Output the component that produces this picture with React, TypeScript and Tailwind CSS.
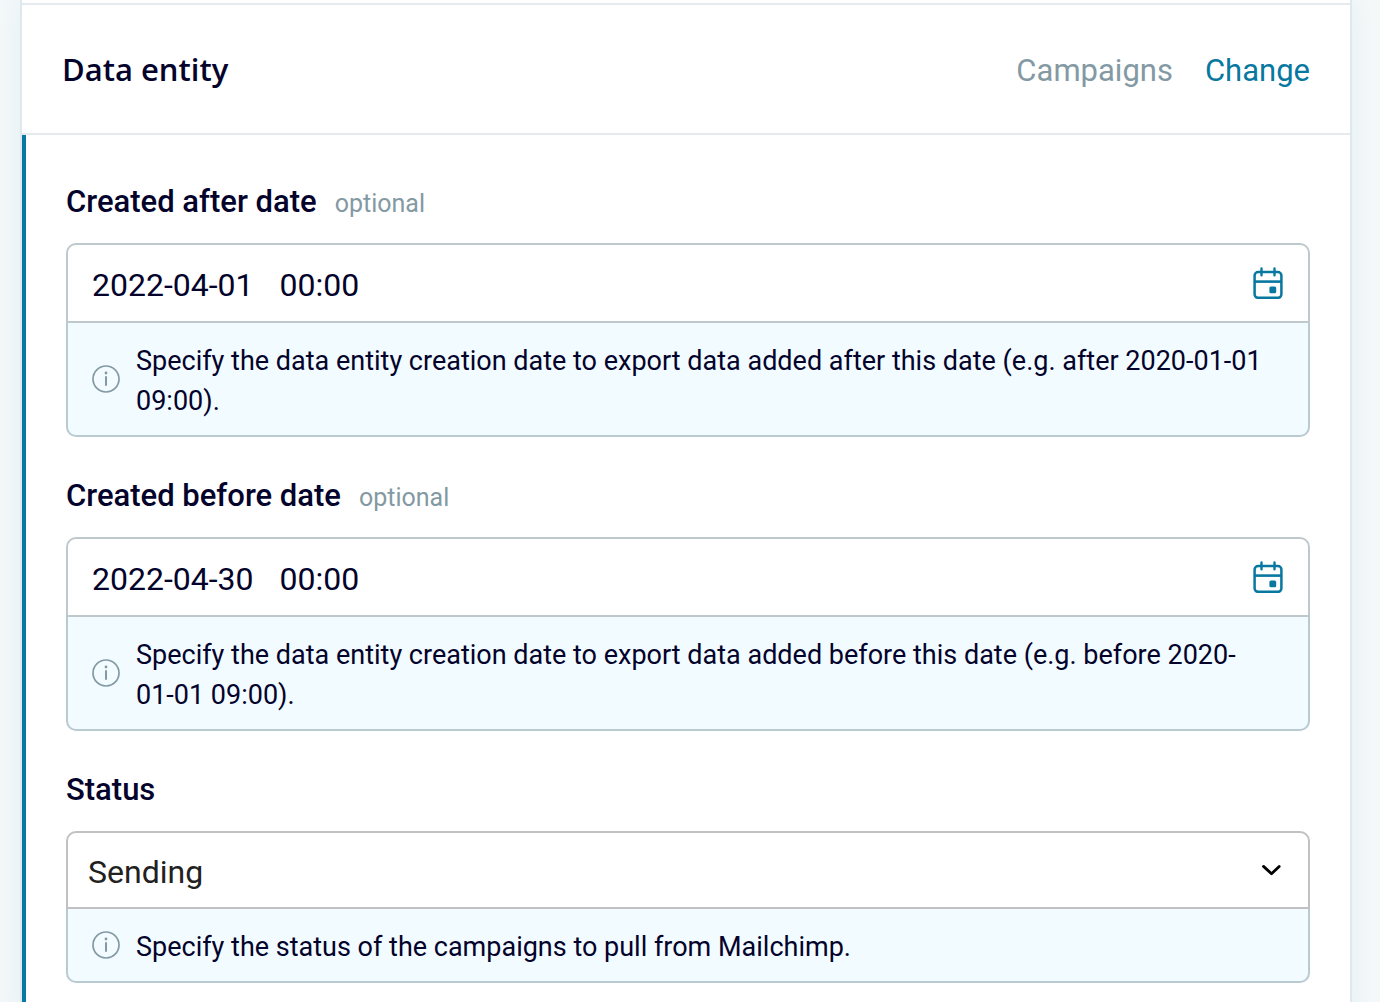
import React, { type ReactNode } from "react";

const InfoIcon = () => (
  <svg className="size-7 shrink-0" viewBox="0 0 28 28" fill="none" aria-hidden="true">
    <circle cx="14" cy="14" r="13" stroke="#8399a3" strokeWidth="1.7" />
    <path d="M14 11.2V20.8" stroke="#8399a3" strokeWidth="2" />
    <circle cx="14" cy="8" r="1.4" fill="#8399a3" />
  </svg>
);

const CalendarIcon = () => (
  <svg className="h-8 w-8" viewBox="0 0 32 32" fill="none" aria-hidden="true">
    <rect x="2.6" y="5" width="26.8" height="25.8" rx="3.5" stroke="#0878a0" strokeWidth="2.5" />
    <path d="M2.5 14.6H29.5" stroke="#0878a0" strokeWidth="2.6" />
    <path d="M9.5 1.4V8.2M22.5 1.4V8.2" stroke="#0878a0" strokeWidth="2.4" strokeLinecap="round" />
    <rect x="17.4" y="19.4" width="6.8" height="6.8" rx="1.5" fill="#0878a0" />
  </svg>
);

const ChevronIcon = () => (
  <svg className="h-3 w-5" viewBox="0 0 20 12" fill="none" aria-hidden="true">
    <path
      d="M1.5 2.4L9.5 9.8L17.2 2.4"
      stroke="#000"
      strokeWidth="2.8"
      strokeLinecap="round"
      strokeLinejoin="round"
    />
  </svg>
);

interface FieldProps {
  id: string;
  label: string;
  optional?: boolean;
  hint: ReactNode;
  children: ReactNode;
}

const Field: React.FC<FieldProps> = ({ id, label, optional, hint, children }) => (
  <div>
    <div className="mb-[19px] flex items-baseline gap-[18px]">
      <label htmlFor={id} className="text-[31px] leading-[44px] font-medium">
        {label}
      </label>
      {optional && <span className="text-[25px] leading-8 text-[#8399a3]">optional</span>}
    </div>
    {children}
    <div
      id={`${id}-hint`}
      className="flex items-center gap-4 rounded-b-[10px] border-2 border-t-0 border-[#b9cad1] bg-[#f2fbff] px-6"
    >
      <InfoIcon />
      <p className="pt-[18px] pb-[14px] text-[27px] leading-10">{hint}</p>
    </div>
  </div>
);

interface DateFieldProps {
  id: string;
  label: string;
  date: string;
  time: string;
  hint: ReactNode;
}

const DateField: React.FC<DateFieldProps> = ({ id, label, date, time, hint }) => (
  <Field id={id} label={label} hint={hint} optional>
    <div className="flex h-20 items-center rounded-t-[10px] border-2 border-[#bfc9cd] px-6">
      <div className="flex flex-1 items-center gap-[26px] pt-[3px] text-[32px]">
        <input
          id={id}
          type="text"
          defaultValue={date}
          aria-describedby={`${id}-hint`}
          className="field-sizing-content outline-none"
        />
        <input
          type="text"
          defaultValue={time}
          aria-label={`${label} time`}
          className="field-sizing-content outline-none"
        />
      </div>
      <button type="button" aria-label="Open calendar">
        <CalendarIcon />
      </button>
    </div>
  </Field>
);

export default function App() {
  return (
    <div className="min-h-screen overflow-hidden bg-[#f4f8f9] pr-7 pl-5 font-['Roboto','Liberation_Sans',sans-serif] text-[#03032b]">
      <main className="min-h-screen border-x-2 border-[#dde9ef] bg-white pt-[3px] shadow-[0_0_24px_#e2eff4]">
        <header className="flex items-center justify-between border-y-2 border-[#e4eaee] px-10 py-11">
          <h2 className="font-['Open_Sans',sans-serif] text-[31px] leading-10 font-semibold">
            Data entity
          </h2>
          <div className="flex items-center gap-8 pt-1 text-[31px] leading-9">
            <span className="text-[#8399a3]">Campaigns</span>
            <a href="#change" className="text-[#0878a0]">
              Change
            </a>
          </div>
        </header>

        <section className="flex flex-col gap-[37px] border-l-4 border-[#0878a0] px-10 pt-[45px] pb-10">
          <DateField
            id="created-after"
            label="Created after date"
            date="2022-04-01"
            time="00:00"
            hint="Specify the data entity creation date to export data added after this date (e.g. after 2020-01-01 09:00)."
          />
          <DateField
            id="created-before"
            label="Created before date"
            date="2022-04-30"
            time="00:00"
            hint={
              <>
                Specify the data entity creation date to export data added before this date (e.g.
                before 2020-<span className="whitespace-nowrap">01-01</span> 09:00).
              </>
            }
          />
          <Field
            id="status"
            label="Status"
            hint="Specify the status of the campaigns to pull from Mailchimp."
          >
            <div className="relative">
              <select
                id="status"
                defaultValue="sending"
                aria-describedby="status-hint"
                className="block h-[78px] w-full appearance-none rounded-t-[10px] border-2 border-[#c1c1c3] bg-white px-5 pt-[3px] text-[32px] text-[#212121] outline-none"
              >
                <option value="sending">Sending</option>
              </select>
              <span className="pointer-events-none absolute inset-y-0 right-7 flex items-center">
                <ChevronIcon />
              </span>
            </div>
          </Field>
        </section>
      </main>
    </div>
  );
}
